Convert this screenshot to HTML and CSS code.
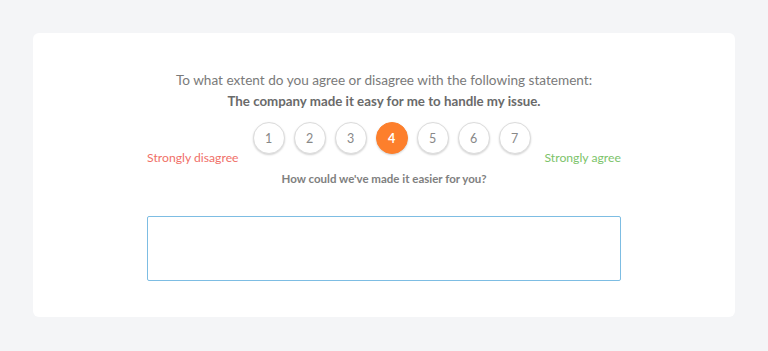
FILE: index.html
```html
<!DOCTYPE html>
<html>
<head>
  <title>Survey</title>
  <link rel="stylesheet" href="styles.css">
</head>
<body>
  <div class="card">
    <!-- Question -->
    <p class="prompt">To what extent do you agree or disagree with the following statement:</p>
    <p class="statement">The company made it easy for me to handle my issue.</p>
    <!-- Scale -->
    <div class="scale">
      <span class="end end-low">Strongly disagree</span>
      <div class="options">
        <button class="option">1</button>
        <button class="option">2</button>
        <button class="option">3</button>
        <button class="option selected">4</button>
        <button class="option">5</button>
        <button class="option">6</button>
        <button class="option">7</button>
      </div>
      <span class="end end-high">Strongly agree</span>
    </div>
    <!-- Follow up -->
    <p class="follow-up">How could we've made it easier for you?</p>
    <textarea class="answer"></textarea>
  </div>
</body>
</html>
```

FILE: styles.css
```css
body {
  margin: 0;
  padding: 33px;
  background-color: #f4f5f7;
  font-family: "Lato", "Open Sans", sans-serif;
}
.card {
  background-color: #fff;
  border-radius: 6px;
  height: 284px;
  box-sizing: border-box;
  padding-top: 38px;
  display: flex;
  flex-direction: column;
  align-items: center;
}
p {
  margin: 0;
}
.prompt {
  font-size: 13.6px;
  color: #7a7a7a;
  line-height: 19px;
}
.statement {
  font-size: 13.3px;
  font-weight: bold;
  color: #6a6a6a;
  line-height: 19px;
  margin-top: 2px;
}
.scale {
  display: flex;
  align-items: flex-end;
  margin-top: 11px;
}
.options {
  display: flex;
  gap: 9px;
  margin: 0 14px;
}
.option {
  width: 32px;
  height: 32px;
  border-radius: 50%;
  border: 1px solid #dcdcdc;
  background: #fff;
  box-shadow: 0 1px 2px rgba(0, 0, 0, 0.18);
  color: #888;
  font-family: inherit;
  font-size: 12.5px;
  padding: 0;
}
.option.selected {
  background: #fd7f2c;
  border-color: #fd7f2c;
  color: #fff;
  font-weight: bold;
}
.end {
  font-size: 12.2px;
  line-height: 16px;
  margin-bottom: -12px;
}
.end-low {
  color: #f07068;
}
.end-high {
  color: #7cc36a;
}
.follow-up {
  font-size: 11.5px;
  font-weight: bold;
  color: #808080;
  margin-top: 18px;
}
.answer {
  width: 474px;
  height: 65px;
  box-sizing: border-box;
  margin-top: 31px;
  border: 1px solid #7dbde3;
  border-radius: 2px;
  resize: none;
}
```
